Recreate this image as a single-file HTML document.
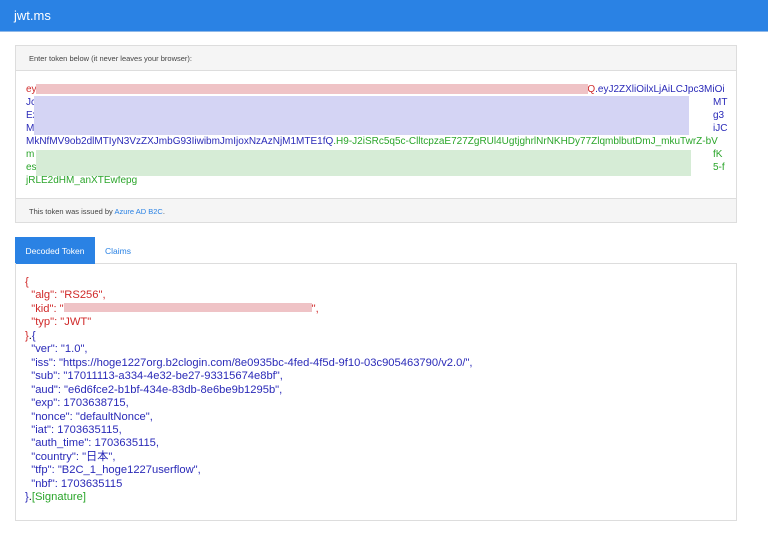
<!DOCTYPE html>
<html><head><meta charset="utf-8"><style>
*{margin:0;padding:0;box-sizing:border-box}
body{width:768px;height:554px;background:#fff;font-family:"Liberation Sans","Noto Sans CJK JP",sans-serif;position:relative;overflow:hidden}
.hdr{position:absolute;left:0;top:0;width:768px;height:32px;background:#2a82e4;border-bottom:1px solid #8fb8e8}
.hdr span{position:absolute;left:14px;top:8px;color:#fff;font-size:13px}
.card{position:absolute;left:15px;top:45px;width:722px;height:178px;border:1px solid #ddd}
.ch{height:25px;background:#f5f5f5;border-bottom:1px solid #ddd;font-size:7.5px;color:#444;padding:8px 0 0 13px}
.cf{position:absolute;left:0;bottom:0;width:100%;height:24px;background:#f5f5f5;border-top:1px solid #ddd;font-size:7.5px;color:#444;padding:8px 0 0 13px}
.cf a{color:#2a82e4;text-decoration:none}
.tok{position:absolute;left:10px;top:37px;font-size:10px;line-height:13px;white-space:nowrap}
.r{color:#d02a2a}.b{color:#2a2ab8}.g{color:#2aa52a}
.blk{position:absolute}
.tabs{position:absolute;left:15px;top:237px;width:722px;height:27px;border-bottom:1px solid #ddd}
.t1{position:absolute;left:0;top:0;width:80px;height:27px;background:#2a82e4;color:#fff;font-size:8.5px;text-align:center;padding-top:9px}
.t2{position:absolute;left:90px;top:9px;color:#2a82e4;font-size:8.5px}
.pan{position:absolute;left:15px;top:263px;width:722px;height:258px;border:1px solid #ddd;border-top:none}
.js{position:absolute;left:25px;top:276px;font-size:11.2px;line-height:13.45px;white-space:pre}
</style></head><body>
<div class="hdr"><span>jwt.ms</span></div>
<div class="card">
<div class="ch">Enter token below (it never leaves your browser):</div>
<div class="tok">
<div><span class="r">ey</span><span style="display:inline-block;width:548px"></span><span class="r">fQ</span><span class="b">.eyJ2ZXliOilxLjAiLCJpc3MiOi</span></div>
<div class="b">Jc</div><div class="b">Ex</div><div class="b">M</div>
<div><span class="b">MkNfMV9ob2dlMTIyN3VzZXJmbG93IiwibmJmIjoxNzAzNjM1MTE1fQ</span><span class="g">.H9-J2iSRc5q5c-ClltcpzaE727ZgRUl4UgtjghrlNrNKHDy77ZlqmblbutDmJ_mkuTwrZ-bV</span></div>
<div class="g">m</div><div class="g">es</div><div class="g">jRLE2dHM_anXTEwfepg</div>
</div>
<div class="blk" style="left:20px;top:38px;width:552px;height:10px;background:#efc3c6"></div>
<div class="blk" style="left:18px;top:50px;width:655px;height:39px;background:#d4d4f4"></div>
<div class="tok" style="left:697px;top:50px;color:#2a2ab8">MT<br>g3<br>iJC</div>
<div class="blk" style="left:20px;top:104px;width:655px;height:26px;background:#d6ecd6"></div>
<div class="tok" style="left:697px;top:102px;color:#2aa52a">fK<br>5-f</div>
<div class="cf">This token was issued by <a>Azure AD B2C</a>.</div>
</div>
<div class="tabs"><div class="t1">Decoded Token</div><div class="t2">Claims</div></div>
<div class="pan"></div>
<div class="js"><span class="r">{
  "alg": "RS256",
  "kid": "<span style="display:inline-block;width:248px;height:9px;background:#efc3c6"></span>",
  "typ": "JWT"
}</span>.<span class="b">{
  "ver": "1.0",
  "iss": "https://hoge1227org.b2clogin.com/8e0935bc-4fed-4f5d-9f10-03c905463790/v2.0/",
  "sub": "17011113-a334-4e32-be27-93315674e8bf",
  "aud": "e6d6fce2-b1bf-434e-83db-8e6be9b1295b",
  "exp": 1703638715,
  "nonce": "defaultNonce",
  "iat": 1703635115,
  "auth_time": 1703635115,
  "country": "日本",
  "tfp": "B2C_1_hoge1227userflow",
  "nbf": 1703635115
}</span>.<span class="g">[Signature]</span></div>
</body></html>
